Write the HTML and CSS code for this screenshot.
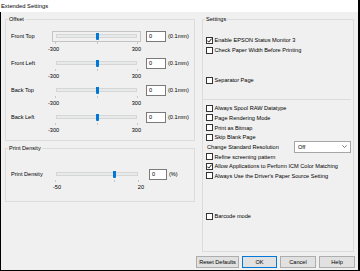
FILE: index.html
```html
<!DOCTYPE html>
<html>
<head>
<meta charset="utf-8">
<link rel="stylesheet" href="styles.css">
</head>
<body>
<div class="win">
  <div class="titlebar">Extended Settings</div>
  <div class="body">
    <div class="cols">
      <div class="left">
        <div class="group offset">
          <span class="legend">Offset</span>
          <div class="srow">
            <div class="sline">
              <span class="slabel">Front Top</span>
              <div class="slider focus"><div class="track"></div><span class="tick t-l"></span><span class="tick t-m"></span><span class="tick t-r"></span><span class="thumb"></span></div>
              <div class="num">0</div>
              <span class="unit">(0.1mm)</span>
            </div>
            <div class="range"><span>-300</span><span>300</span></div>
          </div>
          <div class="srow">
            <div class="sline">
              <span class="slabel">Front Left</span>
              <div class="slider"><div class="track"></div><span class="tick t-l"></span><span class="tick t-m"></span><span class="tick t-r"></span><span class="thumb"></span></div>
              <div class="num">0</div>
              <span class="unit">(0.1mm)</span>
            </div>
            <div class="range"><span>-300</span><span>300</span></div>
          </div>
          <div class="srow">
            <div class="sline">
              <span class="slabel">Back Top</span>
              <div class="slider"><div class="track"></div><span class="tick t-l"></span><span class="tick t-m"></span><span class="tick t-r"></span><span class="thumb"></span></div>
              <div class="num">0</div>
              <span class="unit">(0.1mm)</span>
            </div>
            <div class="range"><span>-300</span><span>300</span></div>
          </div>
          <div class="srow">
            <div class="sline">
              <span class="slabel">Back Left</span>
              <div class="slider"><div class="track"></div><span class="tick t-l"></span><span class="tick t-m"></span><span class="tick t-r"></span><span class="thumb"></span></div>
              <div class="num">0</div>
              <span class="unit">(0.1mm)</span>
            </div>
            <div class="range"><span>-300</span><span>300</span></div>
          </div>
        </div>
        <div class="group density">
          <span class="legend">Print Density</span>
          <div class="srow">
            <div class="sline">
              <span class="slabel">Print Density</span>
              <div class="slider pd"><div class="track"></div><span class="tick t-l"></span><span class="tick t-pd"></span><span class="tick t-r"></span><span class="thumb thumb-pd"></span></div>
              <div class="num num-pd">0</div>
              <span class="unit">(%)</span>
            </div>
            <div class="range range-pd"><span>-50</span><span>20</span></div>
          </div>
        </div>
      </div>
      <div class="group settings">
        <span class="legend">Settings</span>
        <div class="cb first"><span class="box checked"><svg viewBox="0 0 7 7" width="7" height="7"><path d="M1.3 3.6 L2.8 5.1 L5.7 1.6" fill="none" stroke="#000" stroke-width="0.9"/></svg></span><span>Enable EPSON Status Monitor 3</span></div>
        <div class="cb"><span class="box"></span><span>Check Paper Width Before Printing</span></div>
        <div class="cb sep-page"><span class="box"></span><span>Separator Page</span></div>
        <div class="divider"></div>
        <div class="cb list first-list"><span class="box"></span><span>Always Spool RAW Datatype</span></div>
        <div class="cb list"><span class="box"></span><span>Page Rendering Mode</span></div>
        <div class="cb list"><span class="box"></span><span>Print as Bitmap</span></div>
        <div class="cb list"><span class="box"></span><span>Skip Blank Page</span></div>
        <div class="cb list res"><span class="reslabel">Change Standard Resolution</span>
          <div class="select"><span>Off</span><svg viewBox="0 0 5 3" width="5" height="3"><path d="M0.3 0.4 L2.5 2.5 L4.7 0.4" fill="none" stroke="#444" stroke-width="0.7"/></svg></div>
        </div>
        <div class="cb list"><span class="box"></span><span>Refine screening pattern</span></div>
        <div class="cb list"><span class="box checked"><svg viewBox="0 0 7 7" width="7" height="7"><path d="M1.3 3.6 L2.8 5.1 L5.7 1.6" fill="none" stroke="#000" stroke-width="0.9"/></svg></span><span>Allow Applications to Perform ICM Color Matching</span></div>
        <div class="cb list"><span class="box"></span><span>Always Use the Driver's Paper Source Setting</span></div>
        <div class="cb list barcode"><span class="box"></span><span>Barcode mode</span></div>
      </div>
    </div>
    <div class="buttons">
      <div class="btn w-reset">Reset Defaults</div>
      <div class="btn w-ok default">OK</div>
      <div class="btn w-std">Cancel</div>
      <div class="btn w-std">Help</div>
    </div>
  </div>
</div>
</body>
</html>
```
FILE: styles.css
```css
* { box-sizing: border-box; }
html, body { margin: 0; padding: 0; }
body {
  width: 360px;
  height: 271px;
  overflow: hidden;
  background: #f0f0f0;
  font-family: "Liberation Sans", Arial, sans-serif;
  font-size: 5.6px;
  color: #000;
}
.win {
  width: 360px;
  height: 271px;
  display: flex;
  flex-direction: column;
  border-right: 2px solid #000;
  border-bottom: 1px solid #000;
  background: #f0f0f0;
}
.titlebar {
  height: 12px;
  background: #fff;
  padding-left: 1px;
  line-height: 12px;
  font-size: 5.8px;
}
.body {
  flex: 1;
  border-left: 1px solid #000;
  padding: 7px 4px 0 4px;
  display: flex;
  flex-direction: column;
}
.cols { display: flex; gap: 7px; }
.left { width: 190px; display: flex; flex-direction: column; gap: 7px; }
.group {
  border: 1px solid #dcdcdc;
  position: relative;
}
.legend {
  position: absolute;
  left: 2px;
  top: -4px;
  line-height: 7px;
  padding: 0 1px;
  background: #f0f0f0;
}
.offset { height: 122px; padding: 10px 0 0 5px; }
.density { height: 54px; padding: 19px 0 0 5px; }
.srow { height: 27px; }
.sline { display: flex; align-items: center; height: 12px; }
.slabel { width: 41px; flex: none; }
.slider {
  position: relative;
  width: 89px;
  height: 11px;
  flex: none;
  display: flex;
  align-items: center;
  padding: 0 3px;
  margin-right: 5px;
  border: 1px solid transparent;
}
.slider.focus { border-color: #c4c4c4; }
.slider.pd { width: 90px; margin-right: 7px; }
.track {
  width: 100%;
  height: 4px;
  background: #e7eaea;
  border: 1px solid #d6d6d6;
}
.thumb {
  position: absolute;
  left: 43px;
  top: 1px;
  width: 3px;
  height: 7px;
  background: #0078d7;
  border-radius: 0 0 1px 1px;
}
.thumb-pd { left: 60px; }
.tick {
  position: absolute;
  bottom: -3px;
  width: 1px;
  height: 2px;
  background: #c8c8c8;
}
.t-l { left: 2px; }
.t-m { left: 44px; }
.t-r { right: 2px; }
.t-pd { left: 61px; }
.num {
  width: 20px;
  height: 11px;
  flex: none;
  border: 1px solid #7a7a7a;
  background: #fff;
  padding-left: 2px;
  line-height: 9px;
  margin-right: 2px;
}
.num-pd { width: 18px; }
.range {
  display: flex;
  justify-content: space-between;
  width: 93px;
  margin-left: 37px;
  height: 15px;
  line-height: 14px;
}
.range-pd { width: 91px; margin-left: 42px; }
.settings {
  width: 152px;
  height: 233px;
  padding: 15px 0 0 0;
  display: flex;
  flex-direction: column;
}
.cb {
  display: flex;
  align-items: center;
  gap: 1.5px;
  height: 10px;
  padding-left: 3px;
  flex: none;
}
.cb.list { height: 9.65px; }
.sep-page { margin-top: 20px; }
.divider {
  height: 1px;
  background: #dcdcdc;
  margin: 14px 2px 0 0;
  flex: none;
}
.first-list { margin-top: 3.5px; }
.barcode { margin-top: 31px; }
.box {
  width: 7px;
  height: 7px;
  flex: none;
  border: 1px solid #333;
  background: #fff;
  position: relative;
}
.box svg { position: absolute; left: -1px; top: -1px; }
.res { padding-left: 4px; padding-right: 2px; }
.reslabel { flex: 1; }
.select {
  width: 57px;
  height: 12px;
  flex: none;
  border: 1px solid #a6a6a6;
  background: #fff;
  display: flex;
  align-items: center;
  justify-content: space-between;
  padding: 0 3px 0 3px;
}
.buttons {
  display: flex;
  justify-content: flex-end;
  gap: 3px;
  margin-top: 4px;
  margin-right: -1px;
}
.btn {
  height: 12px;
  background: #e1e1e1;
  border: 1px solid #adadad;
  line-height: 10px;
  text-align: center;
}
.btn.default { border-color: #0078d7; }
.w-reset { width: 43px; }
.w-ok { width: 35px; }
.w-std { width: 36px; }
```
